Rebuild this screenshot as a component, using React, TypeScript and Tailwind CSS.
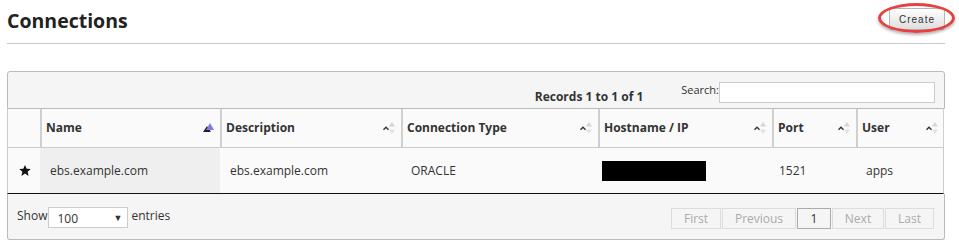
import React from "react";

function SortAsc() {
  return (
    <svg width="12" height="12" viewBox="0 0 12 12" className="shrink-0">
      <polygon points="4,4 8,10 0,10" fill="#222" />
      <polygon points="7,1 11,8 3,8" fill="#7b7be0" />
    </svg>
  );
}

function SortBoth() {
  return (
    <svg width="14" height="16" viewBox="0 0 14 16" className="shrink-0">
      <polygon points="10,2 13,6.5 7,6.5" fill="#d4d4d4" />
      <polygon points="10,14 13,9.5 7,9.5" fill="#e2e2e2" />
      <path d="M1.5 9.8 L4 7.3 L6.5 9.8" stroke="#333" strokeWidth="1.4" fill="none" />
    </svg>
  );
}

const headers = [
  { label: "Name", asc: true, w: "w-[180px]" },
  { label: "Description", w: "w-[181px]" },
  { label: "Connection Type", w: "w-[197px]" },
  { label: "Hostname / IP", w: "w-[174px]" },
  { label: "Port", w: "w-[84px]" },
  { label: "User", w: "w-[88px]" },
];

export default function App() {
  return (
    <div className="w-[959px] h-[245px] bg-white relative overflow-hidden font-['Open_Sans',sans-serif] text-[#333]">
      {/* Title bar */}
      <div className="ml-[7px] w-[938px] h-[44px] border-b border-[#c8c8c8] flex justify-between items-start">
        <h1 className="mt-[7px] text-[19.5px] leading-[28px] font-bold text-[#222]">Connections</h1>
        <div className="relative mt-[8px]">
          <button className="h-[22px] w-[56px] border border-[#b5b5b5] rounded-[3px] bg-gradient-to-b from-white to-[#dedede] text-[10px] tracking-[1px] text-[#333] font-['Liberation_Sans',sans-serif] flex items-center justify-center">
            Create
          </button>
          <div className="absolute left-[-11px] top-[-5px] w-[77px] h-[30px] rounded-[50%] border-[3px] border-[#e8403f] shadow-[0_2px_3px_rgba(0,0,0,0.3)] pointer-events-none" />
        </div>
      </div>

      {/* Table wrapper */}
      <div className="mt-[27px] ml-[7px] w-[938px]">
        {/* Toolbar */}
        <div className="h-[38px] border border-[#bbb] rounded-t-[3px] bg-[#f5f5f5] flex items-start justify-end pr-[9px]">
          <div className="mt-[17px] text-[12px] leading-[16px] font-bold mr-[38px]">Records 1 to 1 of 1</div>
          <div className="mt-[10px] flex items-start">
            <span className="text-[11px] leading-[16px]">Search:</span>
            <input className="w-[216px] h-[21px] border border-[#ccc] bg-white outline-none" />
          </div>
        </div>

        {/* Header row */}
        <div className="w-[937px] flex h-[39px] bg-[#fafafa] border-b border-[#ccc]">
          <div className="w-[33px] border-l border-[#ccc]" />
          {headers.map((h, i) => (
            <div
              key={h.label}
              className={`${h.w} border-l-2 border-[#d0d0d0] flex items-center justify-between pl-[4px] ${i === headers.length - 1 ? "border-r pr-[4px]" : "pr-[5px]"}`}
            >
              <span className="text-[12px] font-bold leading-[16px]">{h.label}</span>
              {h.asc ? <SortAsc /> : <SortBoth />}
            </div>
          ))}
        </div>

        {/* Body row */}
        <div className="w-[937px] flex h-[46px] bg-[#fafafa] border-b border-[#111] border-l border-r border-l-[#ccc] border-r-[#ccc] text-[12px] leading-[16px]">
          <div className="w-[32px] flex items-center justify-center pl-[2px]">
            <svg width="12" height="11" viewBox="0 0 24 23">
              <polygon points="12,0 15.5,8 24,8.5 17.5,14 19.5,23 12,18 4.5,23 6.5,14 0,8.5 8.5,8" fill="#111" />
            </svg>
          </div>
          <div className="w-[180px] bg-[#efefef] flex items-center pl-[10px]">ebs.example.com</div>
          <div className="w-[181px] flex items-center pl-[10px]">ebs.example.com</div>
          <div className="w-[197px] flex items-center pl-[10px]">ORACLE</div>
          <div className="w-[174px] flex items-center pl-[4px]">
            <div className="w-[104px] h-[20px] bg-black" />
          </div>
          <div className="w-[84px] flex items-center pl-[7px]">1521</div>
          <div className="w-[87px] flex items-center pl-[10px]">apps</div>
        </div>

        {/* Footer */}
        <div className="h-[46px] border-x border-b border-[#bbb] rounded-b-[3px] bg-[#f5f5f5] flex items-start justify-between pl-[9px] pr-[10px] pt-[13px] text-[12px] leading-[16px]">
          <div className="flex items-start">
            <span className="mt-[1px]">Show</span>
            <div className="ml-[1px] w-[80px] h-[21px] border border-[#ccc] bg-white flex items-center justify-between pl-[8px] pr-[5px]">
              <span className="mt-[2px]">100</span>
              <span className="text-[9px] text-[#333]">▼</span>
            </div>
            <span className="ml-[3px] mt-[1px]">entries</span>
          </div>
          <div className="flex items-start gap-[1px] mt-[1px]">
            <div className="w-[50px] h-[21px] border border-[#ddd] text-[#aaa] flex items-center justify-center">First</div>
            <div className="w-[74px] h-[21px] border border-[#ddd] text-[#aaa] flex items-center justify-center">Previous</div>
            <div className="w-[34px] h-[21px] border border-[#aaa] text-[#333] flex items-center justify-center">1</div>
            <div className="w-[52px] h-[21px] border border-[#ddd] text-[#aaa] flex items-center justify-center">Next</div>
            <div className="w-[49px] h-[21px] border border-[#ddd] text-[#aaa] flex items-center justify-center">Last</div>
          </div>
        </div>
      </div>
    </div>
  );
}
